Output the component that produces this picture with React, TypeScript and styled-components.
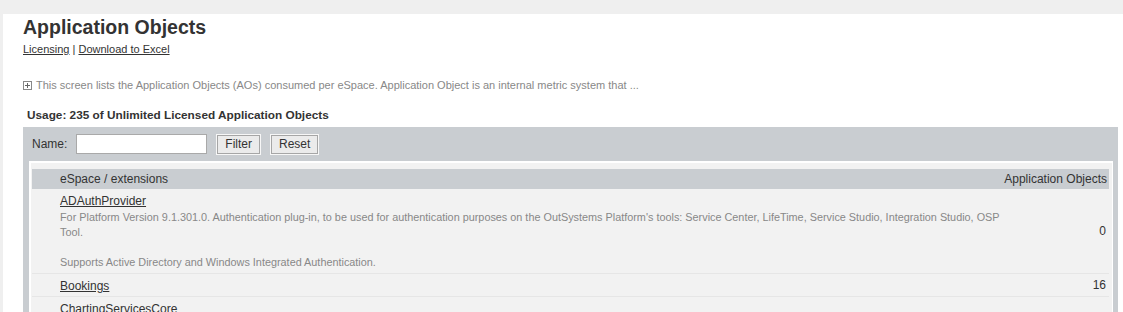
import React from 'react'
import styled, { createGlobalStyle } from 'styled-components'

const GlobalStyle = createGlobalStyle`
  html, body {
    margin: 0;
    padding: 0;
    background: #efefef;
    font-family: "Liberation Sans", Arial, sans-serif;
    color: #333;
  }
`

const Shell = styled.div`
  padding: 14px 0 0 3px;
`

const Content = styled.div`
  background: #fff;
  padding: 0 5px 0 20px;
  min-height: 298px;
`

const Title = styled.h1`
  margin: 0;
  padding-top: 1px;
  font-size: 19.5px;
  line-height: 24px;
  font-weight: bold;
  color: #333;
`

const LinksBar = styled.div`
  font-size: 11px;
  line-height: 13px;
  margin-top: 4px;
  color: #333;
`

const TextLink = styled.a`
  color: #333;
  text-decoration: underline;
  cursor: pointer;
`

const Intro = styled.div`
  display: flex;
  align-items: center;
  gap: 4px;
  margin-top: 23px;
  font-size: 11px;
  line-height: 13px;
  color: #888;
`

const UsageTitle = styled.div`
  margin: 16px 0 0 4px;
  font-size: 11.8px;
  line-height: 14px;
  font-weight: bold;
  color: #333;
`

const GrayPanel = styled.div`
  margin-top: 5px;
  background: #c9cdd1;
  padding: 7px 5px 0 6px;
`

const FilterRow = styled.div`
  display: flex;
  align-items: center;
  height: 20px;
  padding-left: 3px;
  font-size: 12px;
`

const Label = styled.span`
  color: #333;
  margin-right: 9px;
`

const NameInput = styled.input`
  box-sizing: border-box;
  width: 131px;
  height: 20px;
  border: 1px solid #a9a9a9;
  background: #fff;
  margin-right: 9px;
  padding: 0 3px;
  font-family: inherit;
`

const Button = styled.button`
  box-sizing: border-box;
  height: 21px;
  padding: 0 8px;
  margin-right: 9px;
  font-family: inherit;
  font-size: 12px;
  color: #333;
  background: #ebebeb;
  border: 1px solid #f7f7f7;
  box-shadow: inset 0 0 0 1px #a6a6a6;
  cursor: pointer;
`

const InnerBox = styled.div`
  margin-top: 7px;
  border: 2px solid #fff;
  border-bottom: none;
  border-right-width: 1px;
  background: #f2f2f2;
  padding: 6px 3px 0 1px;
`

const Table = styled.table`
  width: 100%;
  border-collapse: collapse;
  font-size: 12px;
`

const HeadCell = styled.th<{ $right?: boolean }>`
  background: #c9cdd1;
  font-weight: normal;
  color: #333;
  height: 20px;
  padding: 0 ${p => (p.$right ? '2px' : '0')} 0 ${p => (p.$right ? '0' : '28px')};
  text-align: ${p => (p.$right ? 'right' : 'left')};
  white-space: nowrap;
`

const Row = styled.tr`
  border-bottom: 1px solid #e6e6e6;
`

const NameCell = styled.td`
  padding: 5px 0 3px 28px;
  vertical-align: top;
`

const CountCell = styled.td`
  padding: 0 3px 0 0;
  text-align: right;
  vertical-align: middle;
  color: #333;
`

const ItemLink = styled.a`
  display: inline-block;
  color: #333;
  text-decoration: underline;
  line-height: 14px;
  cursor: pointer;
`

const ItemPlain = styled.span`
  display: inline-block;
  color: #333;
  line-height: 14px;
`

const Desc = styled.div`
  max-width: 962px;
  font-size: 10.85px;
  line-height: 15px;
  color: #888;
  margin-top: 2px;
`

const PlusIcon = () => (
  <svg width="9" height="9" viewBox="0 0 9 9">
    <rect x="0.5" y="0.5" width="8" height="8" fill="#fff" stroke="#888" />
    <path d="M2 4.5h5M4.5 2v5" stroke="#666" />
  </svg>
)

const App = () => {
  return (
    <Shell>
      <GlobalStyle />
      <Content>
        <Title>Application Objects</Title>
        <LinksBar>
          <TextLink>Licensing</TextLink> | <TextLink>Download to Excel</TextLink>
        </LinksBar>
        <Intro>
          <PlusIcon />
          <span>
            This screen lists the Application Objects (AOs) consumed per eSpace. Application Object is an internal metric system that ...
          </span>
        </Intro>
        <UsageTitle>Usage: 235 of Unlimited Licensed Application Objects</UsageTitle>
        <GrayPanel>
          <FilterRow>
            <Label>Name:</Label>
            <NameInput type="text" />
            <Button>Filter</Button>
            <Button>Reset</Button>
          </FilterRow>
          <InnerBox>
            <Table>
              <thead>
                <tr>
                  <HeadCell>eSpace / extensions</HeadCell>
                  <HeadCell $right>Application Objects</HeadCell>
                </tr>
              </thead>
              <tbody>
                <Row>
                  <NameCell>
                    <ItemLink>ADAuthProvider</ItemLink>
                    <Desc>
                      For Platform Version 9.1.301.0. Authentication plug-in, to be used for authentication purposes on the OutSystems Platform's tools: Service Center, LifeTime, Service Studio, Integration Studio, OSP Tool.
                      <br />
                      <br />
                      Supports Active Directory and Windows Integrated Authentication.
                    </Desc>
                  </NameCell>
                  <CountCell>0</CountCell>
                </Row>
                <Row>
                  <NameCell>
                    <ItemLink>Bookings</ItemLink>
                  </NameCell>
                  <CountCell>16</CountCell>
                </Row>
                <Row>
                  <NameCell>
                    <ItemPlain>ChartingServicesCore</ItemPlain>
                  </NameCell>
                  <CountCell />
                </Row>
              </tbody>
            </Table>
          </InnerBox>
        </GrayPanel>
      </Content>
    </Shell>
  )
}

export default App
